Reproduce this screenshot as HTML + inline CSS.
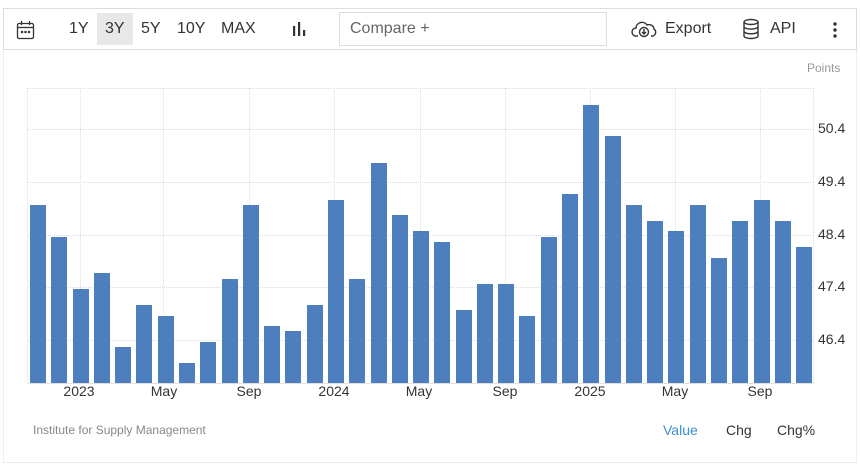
<!DOCTYPE html>
<html><head><meta charset="utf-8"><style>
*{margin:0;padding:0;box-sizing:border-box}
body{width:860px;height:464px;background:#fff;font-family:"Liberation Sans",Arial,sans-serif;position:relative;overflow:hidden;color:#333}
.abs{position:absolute}
.tb{left:3px;top:8px;width:854px;height:42px;border:1px solid #ddd;background:#fff}
.panel{left:3px;top:49px;width:854px;height:414px;border:1px solid #eee;border-top:none}
.btn{top:20px;font-size:16px;color:#333}
.gh{left:28px;width:785px;border-top:1px dotted #ddd;height:0}
.gv{top:88px;height:295px;border-left:1px dotted #ddd;width:0}
.yl{left:818px;font-size:14px;color:#333}
.xl{top:383px;font-size:14px;color:#333;width:60px;text-align:center}
.bar{position:absolute;background:#4d7fbf;width:16px}
</style></head><body>
<div class="abs panel"></div>
<div class="abs tb"></div>
<svg class="abs" style="left:16px;top:20px" width="20" height="20" viewBox="0 0 20 20" fill="none" stroke="#333" stroke-width="1.3"><rect x="1.5" y="3.5" width="16" height="15" rx="1.5"/><line x1="1.5" y1="7.5" x2="17.5" y2="7.5"/><line x1="5.5" y1="1" x2="5.5" y2="5"/><line x1="13.5" y1="1" x2="13.5" y2="5"/><circle cx="6" cy="12" r=".6" fill="#333"/><circle cx="9.5" cy="12" r=".6" fill="#333"/><circle cx="13" cy="12" r=".6" fill="#333"/></svg>
<div class="abs" style="left:97px;top:13px;width:36px;height:32px;background:#e8e8e8"></div>
<div class="abs btn" style="left:69px">1Y</div>
<div class="abs btn" style="left:105px">3Y</div>
<div class="abs btn" style="left:141px">5Y</div>
<div class="abs btn" style="left:177px">10Y</div>
<div class="abs btn" style="left:221px">MAX</div>
<svg class="abs" style="left:292px;top:20px" width="16" height="18"><rect x="1" y="6" width="2.2" height="10" fill="#333"/><rect x="6" y="2" width="2.2" height="14" fill="#333"/><rect x="11" y="10" width="2.2" height="6" fill="#333"/></svg>
<div class="abs" style="left:339px;top:12px;width:268px;height:34px;border:1px solid #ddd"></div>
<div class="abs" style="left:350px;top:20px;font-size:16px;color:#666">Compare +</div>
<svg class="abs" style="left:631px;top:19px" width="28" height="20" viewBox="0 0 28 20" fill="none" stroke="#333" stroke-width="1.4"><path d="M7 17H5a4 4 0 0 1 0-8 6 6 0 0 1 11-3 5 5 0 0 1 7 4 4 4 0 0 1-1 7h-2"/><circle cx="13" cy="13" r="4.5" fill="#fff"/><path d="M13 10v5M11 13l2 2 2-2"/></svg>
<div class="abs btn" style="left:665px">Export</div>
<svg class="abs" style="left:742px;top:18px" width="20" height="22" viewBox="0 0 20 22" fill="none" stroke="#333" stroke-width="1.4"><ellipse cx="9" cy="4" rx="7" ry="2.5"/><path d="M2 4v14c0 1.4 3 2.5 7 2.5s7-1.1 7-2.5V4M2 8.6c0 1.4 3 2.5 7 2.5s7-1.1 7-2.5M2 13.3c0 1.4 3 2.5 7 2.5s7-1.1 7-2.5"/></svg>
<div class="abs btn" style="left:770px">API</div>
<svg class="abs" style="left:832px;top:21px" width="6" height="18"><circle cx="3" cy="3" r="1.7" fill="#333"/><circle cx="3" cy="9" r="1.7" fill="#333"/><circle cx="3" cy="15" r="1.7" fill="#333"/></svg>
<div class="abs" style="left:807px;top:61px;font-size:12px;color:#999">Points</div>
<div class="abs gh" style="top:88px"></div>
<div class="abs gh" style="top:129px"></div>
<div class="abs gh" style="top:182px"></div>
<div class="abs gh" style="top:235px"></div>
<div class="abs gh" style="top:287px"></div>
<div class="abs gh" style="top:340px"></div>
<div class="abs gv" style="left:27px"></div>
<div class="abs gv" style="left:80px"></div>
<div class="abs gv" style="left:163px"></div>
<div class="abs gv" style="left:249px"></div>
<div class="abs gv" style="left:334px"></div>
<div class="abs gv" style="left:420px"></div>
<div class="abs gv" style="left:505px"></div>
<div class="abs gv" style="left:590px"></div>
<div class="abs gv" style="left:675px"></div>
<div class="abs gv" style="left:760px"></div>
<div class="abs gv" style="left:813px"></div>
<div class="abs yl" style="top:120px">50.4</div>
<div class="abs yl" style="top:173px">49.4</div>
<div class="abs yl" style="top:226px">48.4</div>
<div class="abs yl" style="top:278px">47.4</div>
<div class="abs yl" style="top:331px">46.4</div>
<div id="bars"></div>
<div class="abs" style="left:28px;top:383px;width:785px;border-top:1px solid #e0e0e0"></div>
<div class="abs xl" style="left:49px">2023</div>
<div class="abs xl" style="left:134px">May</div>
<div class="abs xl" style="left:219px">Sep</div>
<div class="abs xl" style="left:304px">2024</div>
<div class="abs xl" style="left:389px">May</div>
<div class="abs xl" style="left:475px">Sep</div>
<div class="abs xl" style="left:560px">2025</div>
<div class="abs xl" style="left:645px">May</div>
<div class="abs xl" style="left:730px">Sep</div>
<div class="abs" style="left:33px;top:423px;font-size:12px;color:#888">Institute for Supply Management</div>
<div class="abs" style="left:663px;top:422px;font-size:14px;color:#3a8fd8">Value</div>
<div class="abs" style="left:726px;top:422px;font-size:14px;color:#333">Chg</div>
<div class="abs" style="left:777px;top:422px;font-size:14px;color:#333">Chg%</div>
<script>
var t=[205,237,289,273,347,305,316,363,342,279,205,326,331,305,200,279,163,215,231,242,310,284,284,316,237,194,105,136,205,221,231,205,258,221,200,221,247];
var h='';for(var i=0;i<t.length;i++){var x=30+i*21.28;h+='<div class="bar" style="left:'+x.toFixed(1)+'px;top:'+t[i]+'px;height:'+(383-t[i])+'px"></div>';}
document.getElementById('bars').innerHTML=h;
</script>
</body></html>
